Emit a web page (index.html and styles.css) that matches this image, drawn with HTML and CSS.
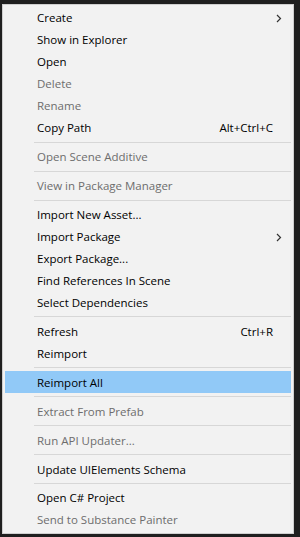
FILE: index.html
```html
<!DOCTYPE html>
<html>
<head>
<meta charset="utf-8">
<link rel="stylesheet" href="styles.css">
</head>
<body>
<div class="menu">
  <div class="item"><span class="label">Create</span><span class="sub"><svg width="6" height="9" viewBox="0 0 6 9"><path d="M1 1 L4.5 4.5 L1 8" fill="none" stroke="#333" stroke-width="1.2"/></svg></span></div>
  <div class="item"><span class="label">Show in Explorer</span></div>
  <div class="item"><span class="label">Open</span></div>
  <div class="item disabled"><span class="label">Delete</span></div>
  <div class="item disabled"><span class="label">Rename</span></div>
  <div class="item"><span class="label">Copy Path</span><span class="key">Alt+Ctrl+C</span></div>
  <div class="sep"></div>
  <div class="item disabled"><span class="label">Open Scene Additive</span></div>
  <div class="sep"></div>
  <div class="item disabled"><span class="label">View in Package Manager</span></div>
  <div class="sep"></div>
  <div class="item"><span class="label">Import New Asset...</span></div>
  <div class="item"><span class="label">Import Package</span><span class="sub"><svg width="6" height="9" viewBox="0 0 6 9"><path d="M1 1 L4.5 4.5 L1 8" fill="none" stroke="#333" stroke-width="1.2"/></svg></span></div>
  <div class="item"><span class="label">Export Package...</span></div>
  <div class="item"><span class="label">Find References In Scene</span></div>
  <div class="item"><span class="label">Select Dependencies</span></div>
  <div class="sep"></div>
  <div class="item"><span class="label">Refresh</span><span class="key">Ctrl+R</span></div>
  <div class="item"><span class="label">Reimport</span></div>
  <div class="sep"></div>
  <div class="item active"><span class="label">Reimport All</span></div>
  <div class="sep"></div>
  <div class="item disabled"><span class="label">Extract From Prefab</span></div>
  <div class="sep"></div>
  <div class="item disabled"><span class="label">Run API Updater...</span></div>
  <div class="sep"></div>
  <div class="item"><span class="label">Update UIElements Schema</span></div>
  <div class="sep"></div>
  <div class="item"><span class="label">Open C# Project</span></div>
  <div class="item disabled"><span class="label">Send to Substance Painter</span></div>
</div>
</body>
</html>
```
FILE: styles.css
```css
html, body {
  margin: 0;
  padding: 0;
  background: #1f1f1f;
  height: 537px;
  overflow: hidden;
}
body {
  padding: 4px 0 0 2px;
  box-sizing: border-box;
}
.menu {
  width: 292px;
  height: 530px;
  box-sizing: border-box;
  background: #f2f2f2;
  border: 1px solid #cfcfcf;
  padding: 2px 1px;
  font-family: "Open Sans", "Noto Sans", sans-serif;
  font-size: 11.5px;
  color: #000;
  display: flex;
  flex-direction: column;
}
.item {
  height: 22px;
  margin: 0 1px;
  display: flex;
  align-items: center;
  padding: 0 18px 0 32px;
  position: relative;
  white-space: nowrap;
}
.label {
  flex: 1;
}
.key {
  text-align: right;
}
.sub {
  position: absolute;
  right: 9px;
  top: 7px;
  display: flex;
}
.disabled {
  color: #6d6d6d;
}
.active {
  background: #91c9f7;
}
.sep {
  height: 7px;
  display: flex;
  align-items: center;
  padding-left: 30px;
  margin-right: 1px;
}
.sep::before {
  content: "";
  flex: 1;
  height: 1px;
  background: #d7d7d7;
}
```
